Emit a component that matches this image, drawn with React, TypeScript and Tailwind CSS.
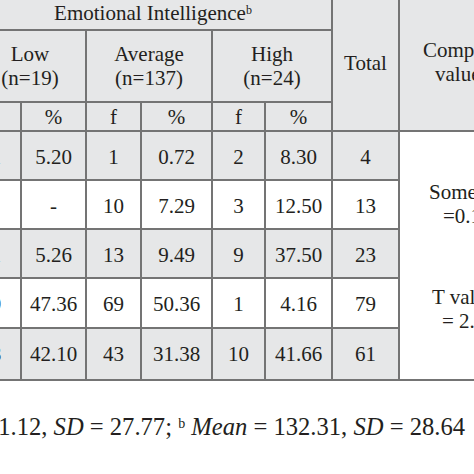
import React from "react";

const GREY = "bg-[#e6e7e8]";

function Cell({
  children,
  className = "",
}: {
  children?: React.ReactNode;
  className?: string;
}) {
  return (
    <div className={`flex justify-center text-center whitespace-nowrap ${className}`}>
      {children}
    </div>
  );
}

const rows: { v: string[]; grey: boolean }[] = [
  { v: ["1", "5.20", "1", "0.72", "2", "8.30", "4"], grey: true },
  { v: ["-", "-", "10", "7.29", "3", "12.50", "13"], grey: false },
  { v: ["1", "5.26", "13", "9.49", "9", "37.50", "23"], grey: true },
  { v: ["9", "47.36", "69", "50.36", "1", "4.16", "79"], grey: false },
  { v: ["8", "42.10", "43", "31.38", "10", "41.66", "61"], grey: true },
];

export default function App() {
  return (
    <div className="w-[474px] h-[474px] overflow-hidden bg-white text-[#231f20] font-['Liberation_Serif','Times_New_Roman',serif]">
      <div className="ml-[-28px] w-[563px] grid grid-cols-[48px_63px_53px_69px_51px_65px_65px_135px] grid-rows-[29px_70px_27px_47px_47px_47px_48px_50px] gap-[2px] bg-[#747474] border-b-2 border-[#747474] text-[21px] leading-[24px]">
        {/* header row 1 */}
        <Cell className={`col-span-6 items-start pt-[1px] ${GREY}`}>
          <span className="ml-[3px]">
            Emotional Intelligence<sup className="text-[12px]">b</sup>
          </span>
        </Cell>
        <Cell className={`col-start-7 row-start-1 row-span-3 items-center pb-1 ${GREY}`}>
          Total
        </Cell>
        <div className={`col-start-8 row-start-1 row-span-3 flex flex-col justify-center pb-[6px] ${GREY}`}>
          <span className="ml-[23px] whitespace-nowrap">Comparison</span>
          <span className="ml-[35px] whitespace-nowrap">values</span>
        </div>

        {/* header row 2 */}
        <Cell className={`col-start-1 row-start-2 col-span-2 flex-col items-center justify-center ${GREY}`}>
          <span className="ml-[3px]">Low</span>
          <span className="ml-[3px]">(n=19)</span>
        </Cell>
        <Cell className={`col-start-3 row-start-2 col-span-2 flex-col items-center justify-center ${GREY}`}>
          <span>Average</span>
          <span>(n=137)</span>
        </Cell>
        <Cell className={`col-start-5 row-start-2 col-span-2 flex-col items-center justify-center ${GREY}`}>
          <span>High</span>
          <span>(n=24)</span>
        </Cell>

        {/* header row 3 */}
        {["f", "%", "f", "%", "f", "%"].map((t, i) => (
          <Cell key={`h${i}`} className={`row-start-3 items-center ${GREY}`}>
            {t}
          </Cell>
        ))}

        {/* comparison values column */}
        <div className="col-start-8 row-start-4 row-span-5 bg-white flex flex-col pt-[48px]">
          <span className="ml-[29px] whitespace-nowrap">Somers&apos; d</span>
          <span className="ml-[43px] whitespace-nowrap">=0.15</span>
          <span className="ml-[32px] mt-[57px] whitespace-nowrap">T value</span>
          <span className="ml-[42px] whitespace-nowrap">= 2.53</span>
        </div>

        {/* data rows */}
        {rows.map((r, ri) =>
          r.v.map((t, ci) => (
            <Cell
              key={`${ri}-${ci}`}
              className={`items-start pt-[13px] ${r.grey ? GREY : "bg-white"}`}
            >
              {t}
            </Cell>
          ))
        )}
      </div>

      <div className="mt-[34px] flex justify-end pr-[9px] text-[24.6px] leading-[24px] whitespace-nowrap">
        <span>
          Note. <sup className="text-[14px]">a</sup> <i>Mean</i> = 131.12, <i>SD</i> = 27.77;{" "}
          <sup className="text-[14px]">b</sup> <i>Mean</i> = 132.31, <i>SD</i> = 28.64
        </span>
      </div>
    </div>
  );
}
